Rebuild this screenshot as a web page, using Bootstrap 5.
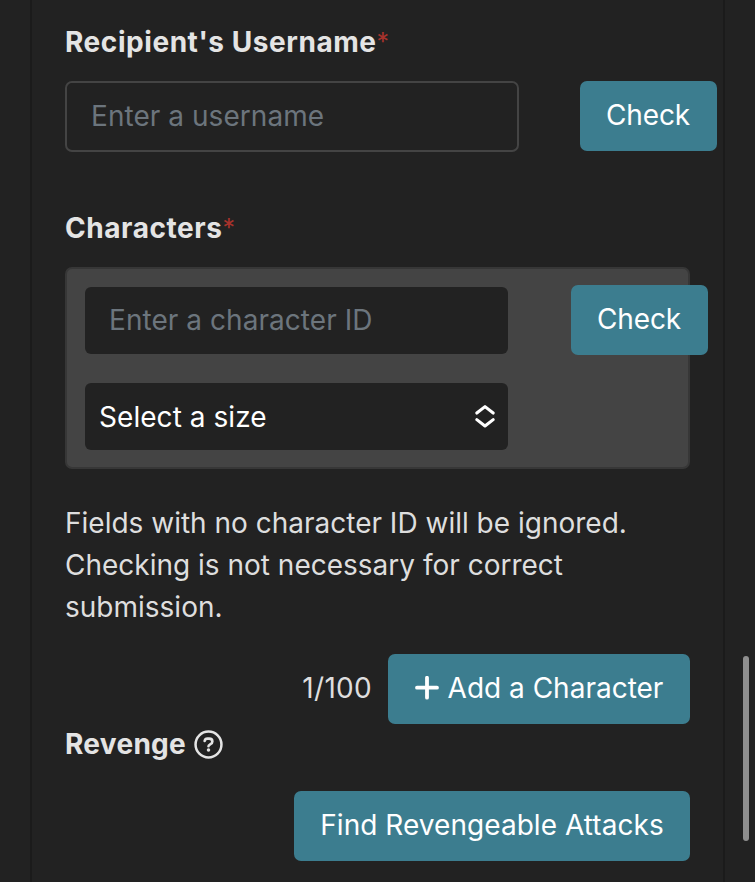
<!DOCTYPE html>
<html lang="en">
<head>
<meta charset="utf-8">
<meta name="viewport" content="width=device-width, initial-scale=1">
<title>Submit Attack</title>
<link href="https://cdn.jsdelivr.net/npm/bootstrap@5.3.0/dist/css/bootstrap.min.css" rel="stylesheet">
<style>
body { background: #222; color: #dedede; font-family: Inter, sans-serif; font-size: 28px; line-height: 42px; height: 882px; overflow: hidden; }
.form-panel { width: 695px; height: 882px; margin-left: 30px; padding: 21px 33px 0; border: solid #1b1b1b; border-width: 0 2px; }
.field-label { display: block; font-weight: 700; height: 42px; color: #e4e4e4; white-space: nowrap; letter-spacing: .56px; }
.revenge-label { letter-spacing: .3px; padding-bottom: 2px; }
.req { color: #a8322c; font-weight: 400; font-size: 25px; line-height: 1; position: relative; top: -1px; }
.form-control, .form-select { background-color: #222 !important; background-image: none; color: #fff; font-size: 28px; line-height: 42px; border-radius: 7px; letter-spacing: .05px; }
.form-control::placeholder { color: #6c757d; opacity: 1; }
.user-input { width: 454px; height: 71px; border: 2px solid #444; padding: 12px 24px 13px; }
.char-input, .char-select { width: 423px; height: 67px; border: 0; border-radius: 6px; padding: 12px 24px 13px; }
.char-select { padding: 13px 40px 12px 14px; letter-spacing: .05px; }
.btn-teal { --bs-btn-color: #fff; --bs-btn-bg: #3c7d8f; --bs-btn-border-color: #3c7d8f; --bs-btn-hover-color: #fff; --bs-btn-hover-bg: #346d7d; --bs-btn-hover-border-color: #346d7d; height: 70px; padding: 0 0 2px; font-size: 28px; line-height: 42px; border-radius: 7px; border: 0; flex: none; white-space: nowrap; }
.w-check { width: 137px; letter-spacing: -.1px; padding-right: 1px; }
.w-add { width: 302px; }
.w-find { width: 396px; letter-spacing: .05px; }
.user-row { margin-top: 18px; gap: 61px; width: 652px; }
.char-label { margin-top: 55px; }
.char-box { margin-top: 18px; width: 625px; height: 202px; background: #444; border: 2px solid #373737; border-radius: 7px; padding: 16px 18px; }
.char-row { gap: 63px; width: 623px; }
.char-input { margin-top: 1px; }
.size-row { width: 423px; margin-top: 28px; }
.size-arrows { position: absolute; right: 12px; top: 21px; pointer-events: none; }
.help-copy { margin: 33px 0 0; }
.add-row { margin-top: 26px; gap: 16px; }
.counter { letter-spacing: .3px; padding-bottom: 2px; }
.find-row { margin-top: 25px; }
.scroll-thumb { position: absolute; left: 743px; top: 656px; width: 6px; height: 185px; border-radius: 3px; background: #8f8f8f; }
</style>
</head>
<body>
<main class="form-panel">
  <label class="field-label" for="username"><span>Recipient's Username</span><span class="req">*</span></label>
  <div class="user-row d-flex align-items-start">
    <input id="username" class="form-control user-input" type="text" placeholder="Enter a username">
    <button class="btn btn-teal w-check" type="button">Check</button>
  </div>

  <label class="field-label char-label" for="character"><span>Characters</span><span class="req">*</span></label>
  <div class="char-box">
    <div class="char-row d-flex align-items-center">
      <input id="character" class="form-control char-input" type="text" placeholder="Enter a character ID">
      <button class="btn btn-teal w-check" type="button">Check</button>
    </div>
    <div class="size-row position-relative">
      <select class="form-select char-select" aria-label="Size"><option>Select a size</option></select>
      <svg class="size-arrows" width="23" height="26" viewBox="0 0 23 26" fill="none" stroke="#fff" stroke-width="3.1" stroke-linecap="round" stroke-linejoin="round" aria-hidden="true"><path d="M3.8 9 12 2.6 20.2 9M3.8 15.6 12 22 20.2 15.6"/></svg>
    </div>
  </div>

  <p class="help-copy">Fields with no character ID will be ignored.<br>Checking is not necessary for correct<br>submission.</p>

  <div class="add-row d-flex justify-content-end align-items-center">
    <span class="counter">1/100</span>
    <button class="btn btn-teal w-add d-flex align-items-center justify-content-center" type="button"><svg class="me-2" width="25" height="25" viewBox="0 0 25 25" stroke="#fff" stroke-width="3.8" stroke-linecap="round" aria-hidden="true"><path d="M12 1.7v20M2 11.7h20"/></svg><span>Add a Character</span></button>
  </div>

  <div class="field-label revenge-label d-flex align-items-center"><span>Revenge</span>
    <svg class="ms-2" width="29" height="29" viewBox="0 0 30 30" fill="none" stroke="#e4e4e4" stroke-linecap="round" stroke-linejoin="round" role="img" aria-label="Help"><circle cx="15" cy="15" r="13.4" stroke-width="2.6"/><path d="M11 11.3c.3-1.5 1.3-2.4 2.9-2.4h1.8c1.9 0 3.3 1.2 3.3 2.9 0 1.4-.8 2.2-2 2.9-1.2.7-2 1.1-2 2.1" stroke-width="2.7"/><circle cx="15" cy="20.8" r="1.8" fill="#e4e4e4" stroke="none"/></svg>
  </div>
  <div class="find-row d-flex justify-content-end">
    <button class="btn btn-teal w-find" type="button">Find Revengeable Attacks</button>
  </div>
</main>
<div class="scroll-thumb"></div>
<script src="https://cdn.jsdelivr.net/npm/bootstrap@5.3.0/dist/js/bootstrap.bundle.min.js"></script>
</body>
</html>
